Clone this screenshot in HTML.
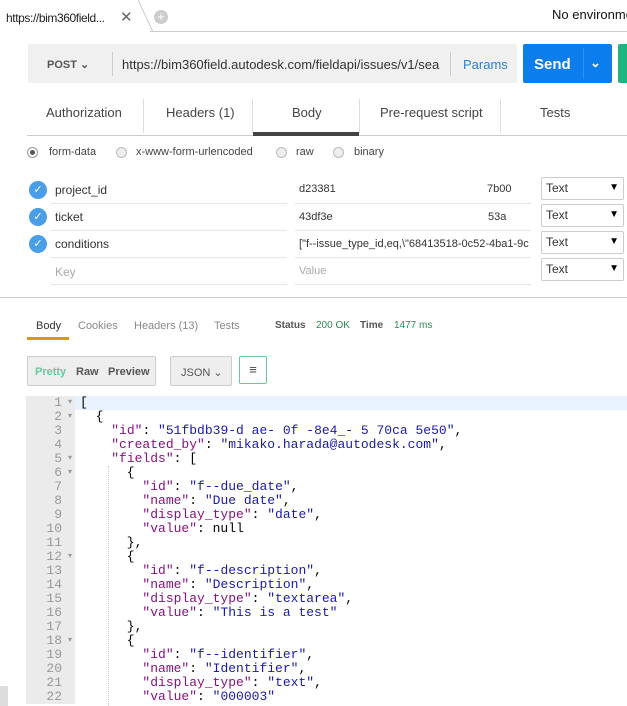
<!DOCTYPE html>
<html><head><style>
*{margin:0;padding:0;box-sizing:border-box}
body{width:627px;height:706px;overflow:hidden;background:#fff;font-family:"Liberation Sans",sans-serif;position:relative;color:#333}
.a{position:absolute;white-space:nowrap}
.code{position:absolute;left:26px;top:396px;width:601px;font-family:"Liberation Mono",monospace;font-size:13px;line-height:14px}
.ln{display:flex;height:14px}
.g{width:49px;background:#ebebeb;color:#999;text-align:right;padding-right:13px;position:relative;flex:none}
.g.f::after{content:"▾";position:absolute;right:3px;font-size:8px;top:0}
.c{padding-left:5px;white-space:pre;color:#000}
.k{color:#881280}.s{color:#1a1aa6}
.cb{width:18px;height:18px;border-radius:50%;background:#4a9ee8;position:absolute;left:29px;color:#fff;font-size:11px;text-align:center;line-height:18px}
.sel{position:absolute;left:541px;width:83px;height:23px;border:1px solid #ccc;border-radius:2px;font-size:12px;padding:3px 4px;color:#333}
.sel::after{content:"▼";position:absolute;right:4px;top:4px;font-size:10px;color:#000}
.line{position:absolute;height:1px;background:#e6e6e6}
.radio{position:absolute;width:11px;height:11px;border-radius:50%;border:1px solid #bbb;background:#eee;top:147px}
.t{font-size:13px;color:#444;top:105px}
.dv{position:absolute;top:99px;width:1px;height:34px;background:#ddd}
</style></head><body>
<!-- tab bar -->
<div class="a" style="left:0;top:31px;width:627px;height:1px;background:#ccc"></div>
<div class="a" style="left:0;top:0;width:150px;height:32px;background:#fff"></div>
<svg class="a" style="left:138px;top:0" width="20" height="33"><path d="M0 0 L15 32" stroke="#ccc" fill="none"/></svg>
<div class="a" style="left:6px;top:11px;font-size:12px;color:#222;letter-spacing:-0.4px">https://bim360field...</div>
<div class="a" style="left:120px;top:8px;font-size:15px;color:#666">✕</div>
<div class="a" style="left:154px;top:10px;width:14px;height:14px;border-radius:50%;background:#ccc;color:#fff;font-size:13px;line-height:14px;text-align:center">+</div>
<div class="a" style="left:552px;top:7px;font-size:13px;color:#111">No environme</div>
<!-- url bar -->
<div class="a" style="left:28px;top:44px;width:489px;height:39px;background:#f0f0f0;border-radius:2px"></div>
<div class="a" style="left:47px;top:58px;font-size:11px;color:#555;font-weight:bold">POST ⌄</div>
<div class="a" style="left:112px;top:52px;width:1px;height:24px;background:#ccc"></div>
<div class="a" style="left:122px;top:57px;font-size:13px;color:#333">https://bim360field.autodesk.com/fieldapi/issues/v1/sea</div>
<div class="a" style="left:450px;top:52px;width:1px;height:24px;background:#ccc"></div>
<div class="a" style="left:463px;top:57px;font-size:13px;color:#2a82d8">Params</div>
<div class="a" style="left:523px;top:44px;width:89px;height:39px;background:#0c7ded;border-radius:2px"></div>
<div class="a" style="left:534px;top:56px;font-size:15px;color:#fff;font-weight:bold">Send</div>
<div class="a" style="left:583px;top:48px;width:1px;height:31px;background:#2d90ee"></div>
<div class="a" style="left:590px;top:55px;font-size:13px;color:#fff;font-weight:bold">⌄</div>
<div class="a" style="left:618px;top:44px;width:9px;height:39px;background:#20b480;border-radius:2px 0 0 2px"></div>
<!-- tabs -->
<div class="a t" style="left:46px">Authorization</div>
<div class="dv" style="left:143px"></div>
<div class="a t" style="left:166px">Headers (1)</div>
<div class="dv" style="left:252px"></div>
<div class="a t" style="left:292px">Body</div>
<div class="dv" style="left:359px"></div>
<div class="a t" style="left:380px">Pre-request script</div>
<div class="dv" style="left:500px"></div>
<div class="a t" style="left:540px">Tests</div>
<div class="a" style="left:27px;top:135px;width:600px;height:1px;background:#ccc"></div>
<div class="a" style="left:253px;top:132px;width:106px;height:4px;background:#444"></div>
<!-- radios -->
<div class="radio" style="left:27px;background:#fff;border-color:#999"><div style="width:5px;height:5px;border-radius:50%;background:#555;margin:2px"></div></div>
<div class="a" style="left:49px;top:146px;font-size:11px;color:#444">form-data</div>
<div class="radio" style="left:116px"></div>
<div class="a" style="left:136px;top:146px;font-size:11px;color:#444">x-www-form-urlencoded</div>
<div class="radio" style="left:276px"></div>
<div class="a" style="left:296px;top:146px;font-size:11px;color:#444">raw</div>
<div class="radio" style="left:333px"></div>
<div class="a" style="left:354px;top:146px;font-size:11px;color:#444">binary</div>
<!-- rows -->
<div class="cb" style="top:181px">✓</div>
<div class="a" style="left:55px;top:183px;font-size:12px;color:#333">project_id</div>
<div class="a" style="left:299px;top:183px;font-size:11px;color:#333">d23381</div>
<div class="a" style="left:487px;top:183px;font-size:11px;color:#333">7b00</div>
<div class="sel" style="top:177px">Text</div>
<div class="line" style="left:51px;top:203px;width:236px"></div><div class="line" style="left:295px;top:203px;width:236px"></div>
<div class="cb" style="top:208px">✓</div>
<div class="a" style="left:55px;top:210px;font-size:12px;color:#333">ticket</div>
<div class="a" style="left:299px;top:211px;font-size:11px;color:#333">43df3e</div>
<div class="a" style="left:488px;top:211px;font-size:11px;color:#333">53a</div>
<div class="sel" style="top:204px">Text</div>
<div class="line" style="left:51px;top:230px;width:236px"></div><div class="line" style="left:295px;top:230px;width:236px"></div>
<div class="cb" style="top:235px">✓</div>
<div class="a" style="left:55px;top:237px;font-size:12px;color:#333">conditions</div>
<div class="a" style="left:299px;top:238px;font-size:11px;color:#333;width:230px;overflow:hidden">["f--issue_type_id,eq,\"68413518-0c52-4ba1-9c</div>
<div class="sel" style="top:231px">Text</div>
<div class="line" style="left:51px;top:257px;width:236px"></div><div class="line" style="left:295px;top:257px;width:236px"></div>
<div class="a" style="left:55px;top:265px;font-size:12px;color:#aaa">Key</div>
<div class="a" style="left:299px;top:265px;font-size:11px;color:#aaa">Value</div>
<div class="sel" style="top:258px">Text</div>
<div class="line" style="left:51px;top:284px;width:236px"></div><div class="line" style="left:295px;top:284px;width:236px"></div>
<div class="a" style="left:0;top:297px;width:627px;height:1px;background:#ccc"></div>
<!-- response tabs -->
<div class="a" style="left:36px;top:320px;font-size:11px;color:#333">Body</div>
<div class="a" style="left:27px;top:337px;width:42px;height:3px;background:#d49a1b"></div>
<div class="a" style="left:78px;top:320px;font-size:11px;color:#888">Cookies</div>
<div class="a" style="left:134px;top:320px;font-size:11px;color:#888">Headers (13)</div>
<div class="a" style="left:214px;top:320px;font-size:11px;color:#888">Tests</div>
<div class="a" style="left:275px;top:320px;font-size:10px;color:#555;font-weight:bold">Status</div>
<div class="a" style="left:316px;top:320px;font-size:10px;color:#2e8b57">200 OK</div>
<div class="a" style="left:360px;top:320px;font-size:10px;color:#555;font-weight:bold">Time</div>
<div class="a" style="left:394px;top:320px;font-size:10px;color:#2e8b57">1477 ms</div>
<!-- toolbar -->
<div class="a" style="left:27px;top:356px;width:129px;height:30px;background:#eee;border:1px solid #ccc;border-radius:2px"></div>
<div class="a" style="left:35px;top:366px;font-size:11px;color:#6cc79c;font-weight:bold">Pretty</div>
<div class="a" style="left:76px;top:366px;font-size:11px;color:#555;font-weight:bold">Raw</div>
<div class="a" style="left:108px;top:366px;font-size:11px;color:#555;font-weight:bold">Preview</div>
<div class="a" style="left:170px;top:356px;width:62px;height:30px;background:#eee;border:1px solid #ccc;border-radius:2px"></div>
<div class="a" style="left:181px;top:366px;font-size:11px;color:#555">JSON ⌄</div>
<div class="a" style="left:239px;top:356px;width:28px;height:28px;border:1px solid #6cc79c;border-radius:2px;font-size:13px;text-align:center;line-height:26px;color:#444">≡</div>
<!-- code -->
<div class="a" style="left:75px;top:396px;width:552px;height:14px;background:#e8f2fe"></div>
<div class="a" style="left:108px;top:466px;height:240px;border-left:1px dotted #ccc"></div>
<div class="code">
<div class="ln"><div class="g f">1</div><div class="c">[</div></div>
<div class="ln"><div class="g f">2</div><div class="c">  {</div></div>
<div class="ln"><div class="g">3</div><div class="c">    <span class="k">"id"</span>: <span class="s">"51fbdb39-d&nbsp;ae- 0f -8e4_- 5 70ca 5e50"</span>,</div></div>
<div class="ln"><div class="g">4</div><div class="c">    <span class="k">"created_by"</span>: <span class="s">"mikako.harada@autodesk.com"</span>,</div></div>
<div class="ln"><div class="g f">5</div><div class="c">    <span class="k">"fields"</span>: [</div></div>
<div class="ln"><div class="g f">6</div><div class="c">      {</div></div>
<div class="ln"><div class="g">7</div><div class="c">        <span class="k">"id"</span>: <span class="s">"f--due_date"</span>,</div></div>
<div class="ln"><div class="g">8</div><div class="c">        <span class="k">"name"</span>: <span class="s">"Due date"</span>,</div></div>
<div class="ln"><div class="g">9</div><div class="c">        <span class="k">"display_type"</span>: <span class="s">"date"</span>,</div></div>
<div class="ln"><div class="g">10</div><div class="c">        <span class="k">"value"</span>: null</div></div>
<div class="ln"><div class="g">11</div><div class="c">      },</div></div>
<div class="ln"><div class="g f">12</div><div class="c">      {</div></div>
<div class="ln"><div class="g">13</div><div class="c">        <span class="k">"id"</span>: <span class="s">"f--description"</span>,</div></div>
<div class="ln"><div class="g">14</div><div class="c">        <span class="k">"name"</span>: <span class="s">"Description"</span>,</div></div>
<div class="ln"><div class="g">15</div><div class="c">        <span class="k">"display_type"</span>: <span class="s">"textarea"</span>,</div></div>
<div class="ln"><div class="g">16</div><div class="c">        <span class="k">"value"</span>: <span class="s">"This is a test"</span></div></div>
<div class="ln"><div class="g">17</div><div class="c">      },</div></div>
<div class="ln"><div class="g f">18</div><div class="c">      {</div></div>
<div class="ln"><div class="g">19</div><div class="c">        <span class="k">"id"</span>: <span class="s">"f--identifier"</span>,</div></div>
<div class="ln"><div class="g">20</div><div class="c">        <span class="k">"name"</span>: <span class="s">"Identifier"</span>,</div></div>
<div class="ln"><div class="g">21</div><div class="c">        <span class="k">"display_type"</span>: <span class="s">"text"</span>,</div></div>
<div class="ln"><div class="g">22</div><div class="c">        <span class="k">"value"</span>: <span class="s">"000003"</span></div></div>
</div>
<div class="a" style="left:0;top:686px;width:8px;height:20px;background:#ddd"></div>
</body></html>
